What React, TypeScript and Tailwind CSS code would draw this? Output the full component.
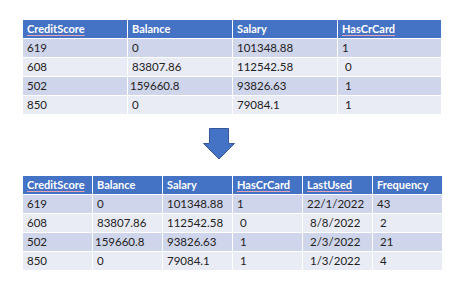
import React from 'react';

type Cell = { v: string; indent?: boolean; outdent?: boolean };

const top = {
  cols: ['CreditScore', 'Balance', 'Salary', 'HasCrCard'],
  marked: ['CreditScore', 'HasCrCard'],
  rows: [
    ['619', '0', '101348.88', '1'],
    ['608', '83807.86', '112542.58', ' 0'],
    ['502', '<159660.8', '93826.63', ' 1'],
    ['850', '0', '79084.1', ' 1'],
  ],
};

const bottom = {
  cols: ['CreditScore', 'Balance', 'Salary', 'HasCrCard', 'LastUsed', 'Frequency'],
  marked: ['CreditScore', 'HasCrCard', 'LastUsed'],
  rows: [
    ['619', '0', '101348.88', '1', '22/1/2022', '43'],
    ['608', '83807.86', '112542.58', ' 0', ' 8/8/2022', ' 2'],
    ['502', '<159660.8', '93826.63', ' 1', ' 2/3/2022', ' 21'],
    ['850', '0', '79084.1', ' 1', ' 1/3/2022', ' 4'],
  ],
};

// leading space = nudged right a bit, "<" = nudged left (as typed in the original)
const parse = (s: string): Cell => {
  if (s.startsWith(' ')) return { v: s.trim(), indent: true };
  if (s.startsWith('<')) return { v: s.slice(1), outdent: true };
  return { v: s };
};

const DataTable: React.FC<{ cols: string[]; marked: string[]; rows: string[][]; grid: string }> = ({
  cols,
  marked,
  rows,
  grid,
}) => (
  <div className={`grid ${grid} gap-px bg-white`}>
    {cols.map((c) => (
      <div key={c} className="h-[18px] bg-[#4472c4] pl-[4px] flex items-center">
        <span
          className={`text-white font-bold text-[11px] ${
            marked.includes(c) ? 'underline decoration-[#e9a3b4] underline-offset-[2px]' : ''
          }`}
        >
          {c}
        </span>
      </div>
    ))}
    {rows.map((r, i) =>
      r.map((raw, j) => {
        const c = parse(raw);
        return (
          <div
            key={`${i}-${j}`}
            className={`h-[18px] flex items-center text-[11.5px] text-[#222] ${
              i % 2 === 0 ? 'bg-[#cfd5ea]' : 'bg-[#e9ebf5]'
            } ${c.indent ? 'pl-[7px]' : c.outdent ? 'pl-[2px]' : 'pl-[4px]'}`}
          >
            {c.v}
          </div>
        );
      })
    )}
  </div>
);

export default function App() {
  return (
    <div
      className="w-[474px] h-[305px] bg-white flex flex-col pl-[23px] pt-[20px]"
      style={{ fontFamily: 'Lato, "Liberation Sans", sans-serif' }}
    >
      <DataTable {...top} grid="grid-cols-[104px_104px_104px_103px] w-[418px]" />

      <div className="mt-[14px] ml-[180px] w-[32px] h-[32px]">
        <svg width="32" height="32" viewBox="0 0 32 32">
          <polygon
            points="6.5,0.5 25.5,0.5 25.5,15.5 31.5,15.5 16,31 0.5,15.5 6.5,15.5"
            fill="#4472c4"
            stroke="#35589a"
            strokeWidth="1"
          />
        </svg>
      </div>

      <div className="mt-[16px]">
        <DataTable {...bottom} grid="grid-cols-[69px_69px_69px_69px_69px_69px] w-[420px]" />
      </div>
    </div>
  );
}
